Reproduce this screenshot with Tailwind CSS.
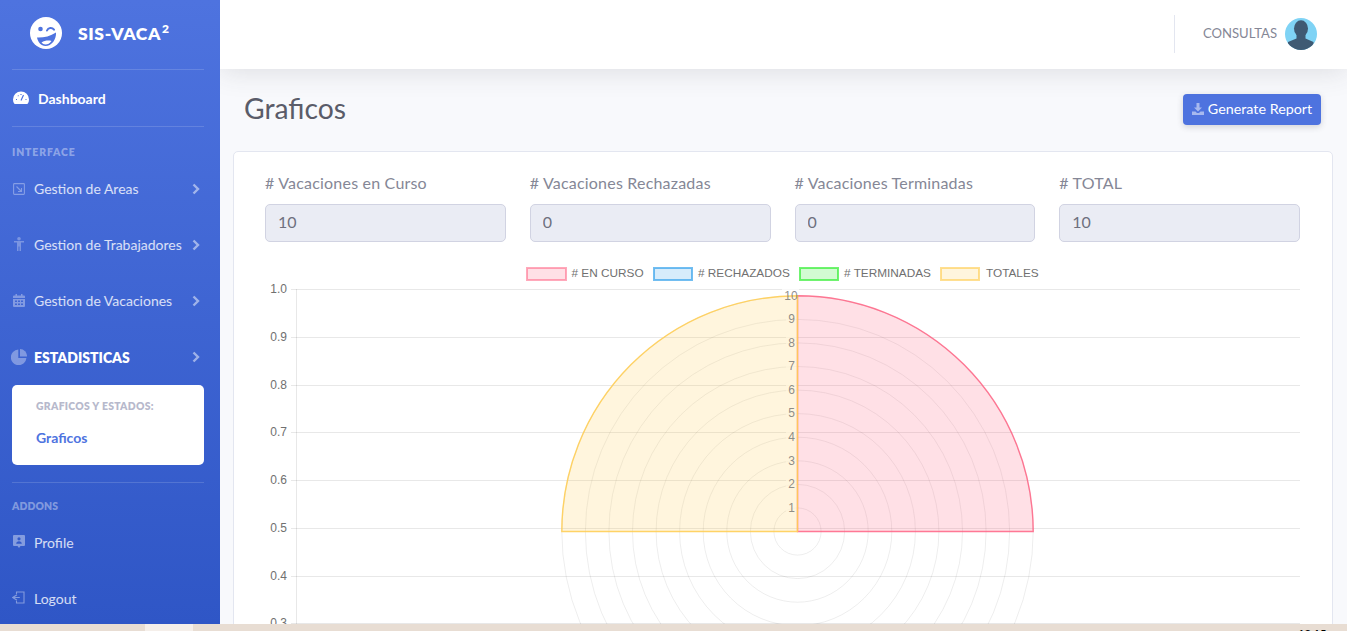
<!DOCTYPE html>
<html lang="es"><head><meta charset="utf-8"><title>SIS-VACA</title>
<script src="https://cdn.jsdelivr.net/npm/@tailwindcss/browser@4"></script></head>
<body class="m-0 overflow-hidden bg-[#f8f9fc]">
<div class="h-[631px] w-[1347px] overflow-hidden flex flex-col font-[Lato,sans-serif]">
<div class="flex h-[624px] shrink-0 overflow-hidden">
  <aside class="w-[220px] shrink-0 h-full bg-linear-to-b from-[#4e73df] to-[#2f56c6] pl-3 pr-4 text-white flex flex-col">
    <div class="h-[70px] shrink-0 border-b border-white/15 flex items-center pl-[18px] gap-[16px]">
      <svg class="w-8 h-8 -mt-[4px]" viewBox="0 0 32 32"><circle cx="16" cy="16" r="16" fill="#fff"/><circle cx="10.500" cy="12" r="2.300" fill="#4e73df"/><path d="M17 13.500c1.200-3 5-3.500 7-.8" fill="none" stroke="#4e73df" stroke-width="2" stroke-linecap="round"/><path d="M7 20.500c6 .3 13-1 19-5 .5 7-4.500 13.500-10.500 13.500C11 29 8 25 7 20.500z" fill="#4e73df"/><path d="M11.500 25.500c3-2 7-2.500 10-1.500-1.500 2.500-4 3.500-6 3.500-1.500 0-3-.7-4-2z" fill="#fff"/></svg>
      <span class="font-extrabold text-[17.500px] tracking-[.6px] leading-none -mt-[2px]">SIS-VACA<sup class="text-[12px] top-[-.6em] ml-[1px]">2</sup></span>
    </div>
    <div class="h-[57px] shrink-0 border-b border-white/15 flex items-center">
      <svg class="w-[16px] h-[14px] ml-[1px]" viewBox="0 0 16 14"><path d="M8 0.500a8 8 0 0 0-8 8c0 1.500.4 2.900 1.100 4.100.2.300.5.400.8.400h12.200c.3 0 .6-.1.800-.4.700-1.200 1.100-2.600 1.100-4.100a8 8 0 0 0-8-8z" fill="#fff"/><path d="M8 9.500 10.500 4M3 8.500h1M12.500 8.500h1M5 4.500l.5.700M8 3v1" stroke="#4e73df" stroke-width="1.200" fill="none"/></svg>
      <span class="ml-[9px] font-bold text-[14px]">Dashboard</span>
    </div>
    <div class="mt-[19px] h-[12px] shrink-0 leading-[12px] text-[10.400px] font-extrabold tracking-[.9px] text-white/40">INTERFACE</div>
    <div class="mt-[3px] h-[56px] shrink-0 flex items-center text-white/80 text-[14px]">
      <svg class="w-[12px] h-[12px] ml-[1px] -mt-[1px] text-white/35" viewBox="0 0 12 12" fill="none" stroke="currentColor" stroke-width="1.100"><rect x=".6" y=".6" width="10.800" height="10.800" rx=".8"/><path d="M3.500 3.500 8 8M8.500 5v3.500H5"/></svg>
      <span class="ml-[9px] flex-1 -mt-[2px]">Gestion de Areas</span>
      <svg class="w-[8px] h-[12px] mr-[4px] -mt-[1px] text-white/50" viewBox="0 0 8 12" fill="none" stroke="currentColor" stroke-width="2.400"><path d="m1.500 1.500 4.500 4.500-4.500 4.500"/></svg>
    </div>
    <div class="h-[56px] shrink-0 flex items-center text-white/80 text-[14px]">
      <svg class="w-[12px] h-[14px] ml-[1px] -mt-[2px] text-white/30" viewBox="0 0 12 14" fill="currentColor"><circle cx="6" cy="1.800" r="1.800"/><path d="M1 4h10v1.500H8V14H6.500V9.500h-1V14H4V5.500H1z"/></svg>
      <span class="ml-[9px] flex-1 -mt-[2px]">Gestion de Trabajadores</span>
      <svg class="w-[8px] h-[12px] mr-[4px] -mt-[1px] text-white/50" viewBox="0 0 8 12" fill="none" stroke="currentColor" stroke-width="2.400"><path d="m1.500 1.500 4.500 4.500-4.500 4.500"/></svg>
    </div>
    <div class="h-[56px] shrink-0 flex items-center text-white/80 text-[14px]">
      <svg class="w-[12px] h-[13px] ml-[1px] -mt-[2px] text-white/35" viewBox="0 0 12 13" fill="currentColor"><path d="M2.500 0h1.500v1.500h4V0h1.500v1.500H11a1 1 0 0 1 1 1V4H0V2.500a1 1 0 0 1 1-1h1.500zM0 5h12v7a1 1 0 0 1-1 1H1a1 1 0 0 1-1-1zm2 1.500V8h2V6.500zm3 0V8h2V6.500zm3 0V8h2V6.500zM2 9.500V11h2V9.500zm3 0V11h2V9.500zm3 0V11h2V9.500z" fill-rule="evenodd"/></svg>
      <span class="ml-[9px] flex-1 -mt-[2px]">Gestion de Vacaciones</span>
      <svg class="w-[8px] h-[12px] mr-[4px] -mt-[1px] text-white/50" viewBox="0 0 8 12" fill="none" stroke="currentColor" stroke-width="2.400"><path d="m1.500 1.500 4.500 4.500-4.500 4.500"/></svg>
    </div>
    <div class="h-[56px] shrink-0 flex items-center text-[14px] font-extrabold">
      <svg class="w-[16px] h-[16px] -ml-[1.500px] text-white/35" viewBox="0 0 16 16" fill="currentColor"><path d="M7.300.6A7.800 7.800 0 1 0 15.400 9H7.300z"/><path d="M9 0a7 7 0 0 1 7 7.400H9z"/></svg>
      <span class="ml-[7.500px] flex-1">ESTADISTICAS</span>
      <svg class="w-[8px] h-[12px] mr-[4px] text-white/50" viewBox="0 0 8 12" fill="none" stroke="currentColor" stroke-width="2.400"><path d="m1.500 1.500 4.500 4.500-4.500 4.500"/></svg>
    </div>
    <div class="h-[80px] shrink-0 rounded-[5px] bg-white pl-[24px] flex flex-col">
      <div class="mt-[15px] text-[10.400px] leading-[13px] font-extrabold tracking-[.3px] text-[#b7b9cc]">GRAFICOS Y ESTADOS:</div>
      <div class="mt-[17px] text-[14px] leading-[16px] font-bold text-[#4e73df]">Graficos</div>
    </div>
    <div class="mt-[17px] shrink-0 border-t border-white/15"></div>
    <div class="mt-[17px] h-[12px] shrink-0 leading-[12px] text-[10.400px] font-extrabold tracking-[.1px] text-white/40">ADDONS</div>
    <div class="mt-[3px] h-[56px] shrink-0 flex items-center text-white/80 text-[14px]">
      <svg class="w-[12px] h-[14px] ml-[1px] -mt-[3px] text-white/40" viewBox="0 0 12 14" fill="currentColor"><path d="M1 0h10a1 1 0 0 1 1 1v9a1 1 0 0 1-1 1H7.500L6 13 4.500 11H1a1 1 0 0 1-1-1V1a1 1 0 0 1 1-1zm5 2.200a1.600 1.600 0 1 0 0 3.200 1.600 1.600 0 0 0 0-3.200zM3.200 8.800h5.600c0-1.500-1.200-2.600-2.800-2.600S3.200 7.300 3.200 8.800z" fill-rule="evenodd"/></svg>
      <span class="ml-[9px] flex-1 -mt-[2px]">Profile</span>
    </div>
    <div class="h-[56px] shrink-0 flex items-center text-white/80 text-[14px]">
      <svg class="w-[13px] h-[13px] -mt-[3px] text-white/40" viewBox="0 0 13 13" fill="none" stroke="currentColor" stroke-width="1.100"><path d="M4.500 3V1h7.500v11H4.500v-2M.8 6.500h7M5 3.700l-4.200 2.800L5 9.300"/></svg>
      <span class="ml-[9px] flex-1 -mt-[2px]">Logout</span>
    </div>
  </aside>
  <div class="flex-1 min-w-0 flex flex-col overflow-hidden">
    <header class="h-[69px] shrink-0 bg-white shadow-[0_2px_28px_rgba(58,59,69,.15)] flex items-center justify-end relative z-10 pr-[30px]">
      <div class="h-[38px] border-l border-[#e3e6f0] mr-[28px] -mt-[1px]"></div>
      <span class="text-[13.100px] text-[#858796] mr-[8px] -mt-[1px]">CONSULTAS</span>
      <svg class="w-8 h-8 -mt-[1px]" viewBox="0 0 32 32"><defs><clipPath id="av"><circle cx="16" cy="16" r="16"/></clipPath></defs><circle cx="16" cy="16" r="16" fill="#7fd3f5"/><g clip-path="url(#av)" fill="#3f5a73"><ellipse cx="16" cy="10.500" rx="7" ry="8.200"/><path d="M11.500 16h9v4.500l8 3.500v9H3v-9l8.500-3.500z"/></g></svg>
    </header>
    <main class="flex-1 min-h-0 pl-[12.500px] pr-[14px]">
      <div class="h-[81.500px] flex items-start justify-between pr-[12px]">
        <h1 class="ml-[11.500px] mt-[20px] text-[28.300px] leading-[38px] text-[#5a5c69]">Graficos</h1>
        <button class="mt-[25px] h-[31px] w-[138px] rounded-[4px] bg-[#4e73df] text-white text-[14.300px] pb-[2px] flex items-center justify-center gap-[4px] shadow-[0_2px_6px_rgba(58,59,69,.2)]">
          <svg class="w-[12px] h-[12px] text-white/50" viewBox="0 0 12 12" fill="currentColor"><path d="M4.500 0h3v4.500H10L6 8.500 2 4.500h2.500zM0 8.500h3.500L5 10h2l1.500-1.500H12V12H0z"/></svg>
          Generate Report
        </button>
      </div>
      <section class="h-[520px] rounded-[5px] border border-[#e3e6f0] bg-white pl-[31.500px] pr-[32px] pt-[19px]">
        <div class="grid grid-cols-4 gap-x-[24px]">
          <label class="block"><span class="block text-[16px] leading-[24px] tracking-[.2px] text-[#858796]"># Vacaciones en Curso</span><input disabled value="10" class="mt-[9px] block w-full h-[38px] rounded-[5px] border border-[#d1d3e2] bg-[#eaecf4] px-[12px] pb-[2px] text-[16px] text-[#6e707e]"></label>
          <label class="block"><span class="block text-[16px] leading-[24px] tracking-[.2px] text-[#858796]"># Vacaciones Rechazadas</span><input disabled value="0" class="mt-[9px] block w-full h-[38px] rounded-[5px] border border-[#d1d3e2] bg-[#eaecf4] px-[12px] pb-[2px] text-[16px] text-[#6e707e]"></label>
          <label class="block"><span class="block text-[16px] leading-[24px] tracking-[.2px] text-[#858796]"># Vacaciones Terminadas</span><input disabled value="0" class="mt-[9px] block w-full h-[38px] rounded-[5px] border border-[#d1d3e2] bg-[#eaecf4] px-[12px] pb-[2px] text-[16px] text-[#6e707e]"></label>
          <label class="block"><span class="block text-[16px] leading-[24px] tracking-[.2px] text-[#858796]"># TOTAL</span><input disabled value="10" class="mt-[9px] block w-full h-[38px] rounded-[5px] border border-[#d1d3e2] bg-[#eaecf4] px-[12px] pb-[2px] text-[16px] text-[#6e707e]"></label>
        </div>
        <svg class="block mt-[20px] -ml-[3px] font-['Liberation_Sans',sans-serif]" width="1038" height="370" viewBox="262 262 1038 370" font-size="12" fill="#707070">
          <g stroke="#000" stroke-opacity=".09" shape-rendering="crispEdges">
            <path d="M296.500 289V631"/>
            <path d="M291 289.500H1300M291 337.500H1300M291 385.500H1300M291 432.500H1300M291 480.500H1300M291 528.500H1300M291 576.500H1300M291 623.500H1300"/>
          </g>
          <g text-anchor="end"><text x="287" y="293">1.0</text><text x="287" y="341">0.9</text><text x="287" y="389">0.8</text><text x="287" y="436">0.7</text><text x="287" y="484">0.6</text><text x="287" y="532">0.5</text><text x="287" y="580">0.4</text><text x="287" y="627">0.3</text></g>
          <g fill="none" stroke="#000" stroke-opacity=".07">
            <circle cx="797.500" cy="531.500" r="23.600"/><circle cx="797.500" cy="531.500" r="47.100"/><circle cx="797.500" cy="531.500" r="70.700"/><circle cx="797.500" cy="531.500" r="94.300"/><circle cx="797.500" cy="531.500" r="117.900"/><circle cx="797.500" cy="531.500" r="141.400"/><circle cx="797.500" cy="531.500" r="165"/><circle cx="797.500" cy="531.500" r="188.600"/><circle cx="797.500" cy="531.500" r="212.100"/><circle cx="797.500" cy="531.500" r="235.700"/>
          </g>
          <g fill="#fff" fill-opacity=".75">
            <rect x="782" y="288" width="17" height="16"/><rect x="786" y="311" width="11" height="16"/><rect x="786" y="335" width="11" height="16"/><rect x="786" y="358" width="11" height="16"/><rect x="786" y="382" width="11" height="16"/><rect x="786" y="405" width="11" height="16"/><rect x="786" y="429" width="11" height="16"/><rect x="786" y="453" width="11" height="16"/><rect x="786" y="476" width="11" height="16"/><rect x="786" y="500" width="11" height="16"/>
          </g>
          <path d="M797.500 531.500V295.800A235.700 235.700 0 0 1 1033.200 531.500Z" fill="#ff6384" fill-opacity=".2" stroke="#ff6384" stroke-opacity=".85" stroke-width="1.400"/>
          <path d="M797.500 531.500V295.800A235.700 235.700 0 0 0 561.800 531.500Z" fill="#ffce56" fill-opacity=".2" stroke="#ffce56" stroke-opacity=".9" stroke-width="1.400"/>
          <g text-anchor="middle" fill-opacity=".8"><text x="791" y="300">10</text><text x="791.500" y="323">9</text><text x="791.500" y="347">8</text><text x="791.500" y="370">7</text><text x="791.500" y="394">6</text><text x="791.500" y="417">5</text><text x="791.500" y="441">4</text><text x="791.500" y="465">3</text><text x="791.500" y="488">2</text><text x="791.500" y="512">1</text></g>
          <rect x="527" y="268" width="39" height="12" fill="#ff6384" fill-opacity=".2" stroke="#ff6384" stroke-opacity=".55" stroke-width="2"/>
          <text x="571.500" y="277" font-size="11.800">&#35; EN CURSO</text>
          <rect x="654" y="268" width="38" height="12" fill="#36a2eb" fill-opacity=".2" stroke="#36a2eb" stroke-opacity=".7" stroke-width="2"/>
          <text x="698" y="277" font-size="11.800">&#35; RECHAZADOS</text>
          <rect x="800" y="268" width="38" height="12" fill="#33ee33" fill-opacity=".22" stroke="#33ee33" stroke-opacity=".7" stroke-width="2"/>
          <text x="844" y="277" font-size="11.800">&#35; TERMINADAS</text>
          <rect x="941" y="268" width="38" height="12" fill="#ffce56" fill-opacity=".2" stroke="#ffce56" stroke-opacity=".65" stroke-width="2"/>
          <text x="986" y="277" font-size="11.800">TOTALES</text>
        </svg>
      </section>
    </main>
  </div>
</div>
<div class="h-[7px] shrink-0 bg-[#e8ddd3] flex overflow-hidden relative">
  <div class="ml-[145px] w-[48px] h-full bg-[#f5efea]"></div>
  <span class="absolute left-[1298px] top-[4px] text-[11px] leading-[12px] font-bold text-black">12:15</span>
</div>
</div>
</body></html>
